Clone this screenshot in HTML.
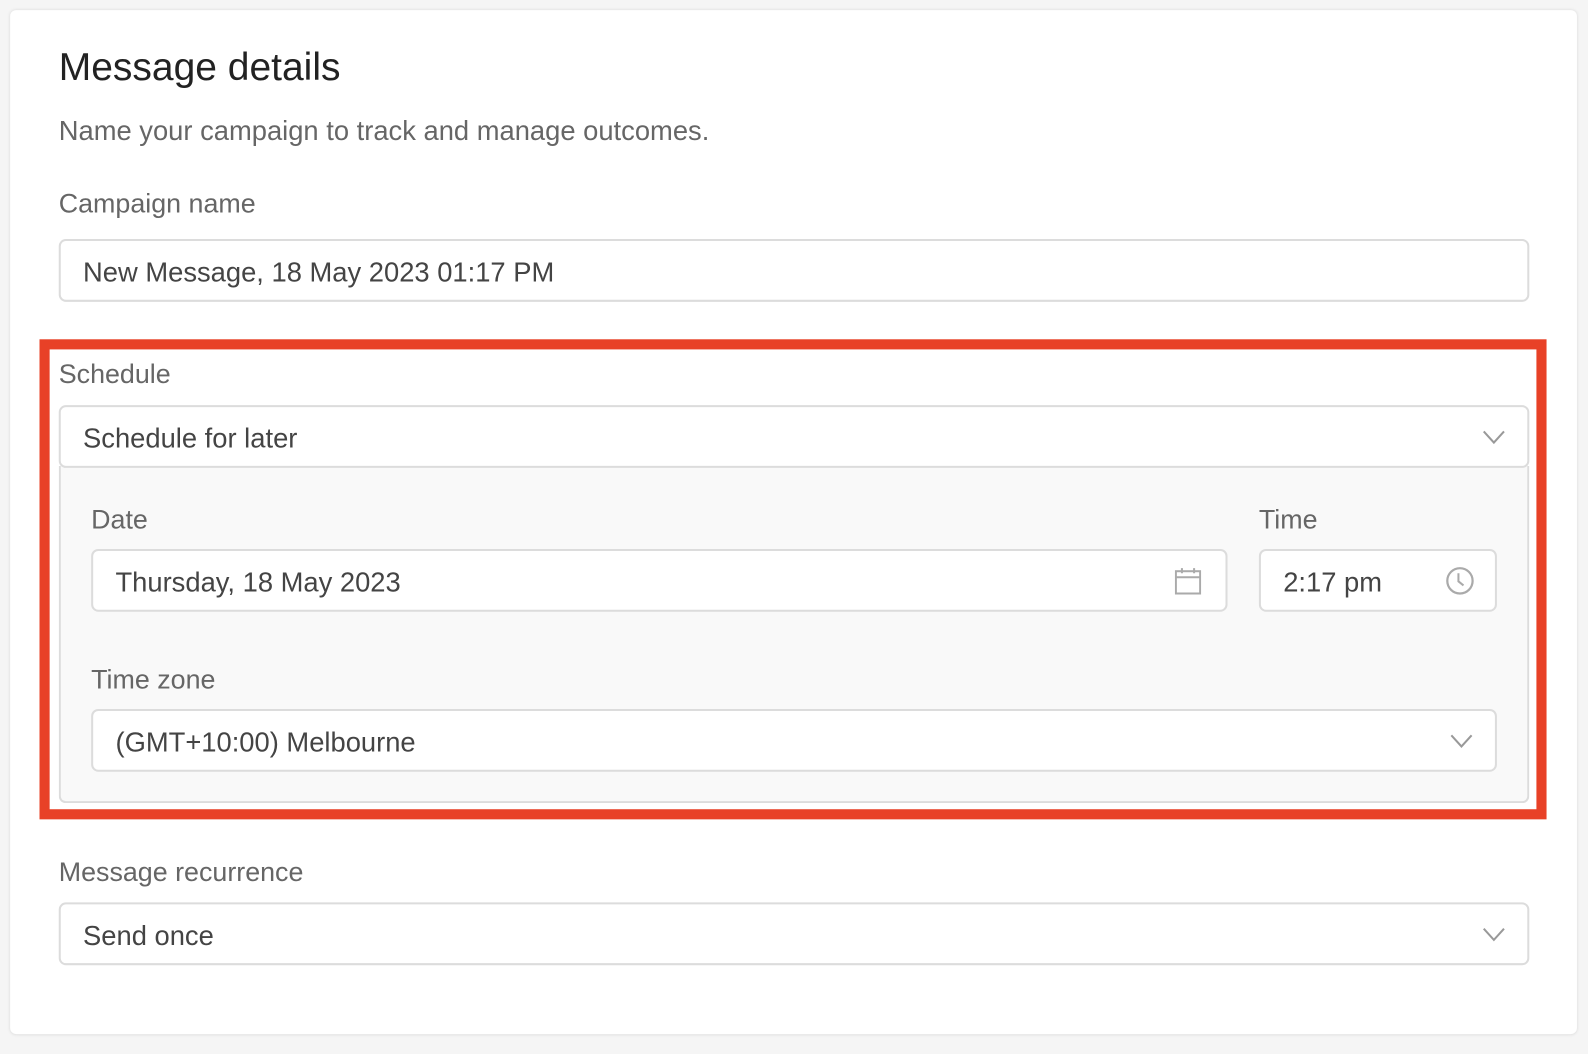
<!DOCTYPE html>
<html><head><meta charset="utf-8"><style>
body{margin:0;background:#f5f5f5;width:1588px;height:1054px;position:relative;font-family:"Liberation Sans",sans-serif;overflow:hidden}
#w{position:absolute;left:0;top:0;width:1568px;height:1041px;transform:scale(1.0128);transform-origin:0 0}
.card{position:absolute;left:10px;top:10px;width:1547px;height:1011px;background:#fff;border-radius:6px;box-shadow:0 0 3px rgba(0,0,0,.12)}
.t{position:absolute;white-space:nowrap;line-height:1}
.l{font-size:26.5px;color:#666}
.in{position:absolute;box-sizing:border-box;height:62px;border:2px solid #dcdcdc;border-radius:7px;background:#fff}
.in span{position:absolute;left:22px;top:18px;font-size:27px;color:#444;line-height:1;white-space:nowrap}
.chev{position:absolute;right:22px;top:23px}
</style></head><body><div id="w">
<div class="card"></div>
<div class="t" style="left:58px;top:48px;font-size:38.5px;color:#222">Message details</div>
<div class="t" style="left:58px;top:116px;font-size:27px;color:#666">Name your campaign to track and manage outcomes.</div>
<div class="t l" style="left:58px;top:188px">Campaign name</div>
<div class="in" style="left:58px;top:236px;width:1452px"><span>New Message, 18 May 2023 01:17 PM</span></div>

<div style="position:absolute;left:39px;top:335px;width:1488px;height:474px;box-sizing:border-box;border:10px solid #e84127"></div>
<div class="t l" style="left:58px;top:356px">Schedule</div>
<div style="position:absolute;left:58px;top:460px;width:1452px;height:333px;box-sizing:border-box;border:2px solid #dcdcdc;border-top:none;border-radius:0 0 7px 7px;background:#f9f9f9"></div>
<div class="in" style="left:58px;top:400px;width:1452px"><span>Schedule for later</span>
<svg class="chev" width="22" height="14" viewBox="0 0 22 14"><path d="M1 1L11 12L21 1" fill="none" stroke="#999" stroke-width="2"/></svg></div>
<div class="t l" style="left:90px;top:500px">Date</div>
<div class="t l" style="left:1243px;top:500px">Time</div>
<div class="in" style="left:90px;top:542px;width:1122px"><span>Thursday, 18 May 2023</span>
<svg style="position:absolute;right:24px;top:16px" width="26" height="27" viewBox="0 0 26 27"><rect x="1" y="4" width="24" height="22" fill="none" stroke="#aaa" stroke-width="2"/><path d="M1 10H25M7 1V6M19 1V6" stroke="#aaa" stroke-width="2"/></svg></div>
<div class="in" style="left:1243px;top:542px;width:235px"><span>2:17 pm</span>
<svg style="position:absolute;right:20px;top:15px" width="29" height="29" viewBox="0 0 29 29"><circle cx="14.5" cy="14.5" r="12.5" fill="none" stroke="#aaa" stroke-width="2.2"/><path d="M13 7V15L18 19" fill="none" stroke="#aaa" stroke-width="2"/></svg></div>
<div class="t l" style="left:90px;top:658px">Time zone</div>
<div class="in" style="left:90px;top:700px;width:1388px"><span>(GMT+10:00) Melbourne</span>
<svg class="chev" width="22" height="14" viewBox="0 0 22 14"><path d="M1 1L11 12L21 1" fill="none" stroke="#999" stroke-width="2"/></svg></div>

<div class="t l" style="left:58px;top:848px">Message recurrence</div>
<div class="in" style="left:58px;top:891px;width:1452px"><span>Send once</span>
<svg class="chev" width="22" height="14" viewBox="0 0 22 14"><path d="M1 1L11 12L21 1" fill="none" stroke="#999" stroke-width="2"/></svg></div>
</div></body></html>
